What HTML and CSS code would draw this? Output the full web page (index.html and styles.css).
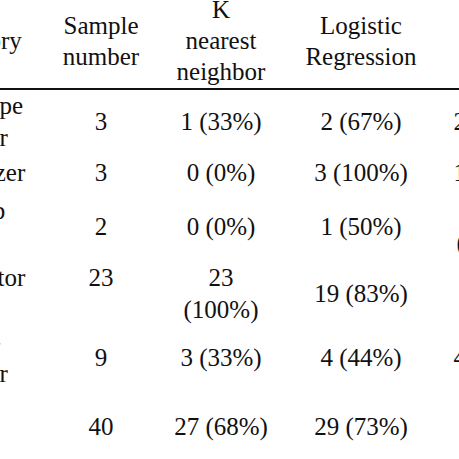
FILE: index.html
```html
<!DOCTYPE html>
<html>
<head>
<meta charset="utf-8">
<link rel="stylesheet" href="styles.css">
</head>
<body>
<table class="results">
  <colgroup>
    <col class="c-cat">
    <col class="c-num">
    <col class="c-knn">
    <col class="c-lr">
    <col class="c-svm">
  </colgroup>
  <thead>
    <tr class="head">
      <th>Category</th>
      <th>Sample<br>number</th>
      <th>K<br>nearest<br>neighbor</th>
      <th>Logistic<br>Regression</th>
      <th>SVM</th>
    </tr>
  </thead>
  <tbody>
    <tr class="r1">
      <td>Otoscope<br>holder</td>
      <td>3</td>
      <td>1 (33%)</td>
      <td>2 (67%)</td>
      <td>2 (67%)</td>
    </tr>
    <tr class="r2">
      <td>Nebulizer</td>
      <td>3</td>
      <td>0 (0%)</td>
      <td>3 (100%)</td>
      <td>1 (33%)</td>
    </tr>
    <tr class="r3">
      <td>Pump<br>(IV)</td>
      <td>2</td>
      <td>0 (0%)</td>
      <td>1 (50%)</td>
      <td>2<br>(100%)</td>
    </tr>
    <tr class="r4">
      <td>Ventilator<br>unit</td>
      <td class="top">23</td>
      <td>23<br>(100%)</td>
      <td>19 (83%)</td>
      <td>21<br>(91%)</td>
    </tr>
    <tr class="r5">
      <td>ECG<br>sensor</td>
      <td>9</td>
      <td>3 (33%)</td>
      <td>4 (44%)</td>
      <td>4 (44%)</td>
    </tr>
    <tr class="r6">
      <td>All</td>
      <td>40</td>
      <td>27 (68%)</td>
      <td>29 (73%)</td>
      <td>30<br>(75%)</td>
    </tr>
  </tbody>
</table>
</body>
</html>
```

FILE: styles.css
```css
html, body {
  margin: 0;
  padding: 0;
  width: 459px;
  height: 459px;
  overflow: hidden;
  background: #ffffff;
}

.results {
  margin-left: -86px;
  margin-top: -6px;
  width: 630px;
  table-layout: fixed;
  border-collapse: collapse;
  font-family: "Liberation Serif", "Times New Roman", serif;
  font-size: 25px;
  line-height: 31.5px;
  color: #111111;
}

.c-cat { width: 124px; }
.c-num { width: 126px; }
.c-knn { width: 114px; }
.c-lr  { width: 166px; }
.c-svm { width: 100px; }

.results th,
.results td {
  padding: 0;
  text-align: center;
  vertical-align: middle;
  white-space: nowrap;
  font-weight: normal;
}

.results td.top {
  vertical-align: top;
  padding-top: 1px;
}

.head th {
  line-height: 31px;
  padding-bottom: 1px;
  border-bottom: 2px solid #111111;
}

.r1 { height: 64.5px; }
.r2 { height: 39px; }
.r3 { height: 68px; }
.r4 { height: 66px; }
.r5 { height: 63px; }
.r6 { height: 75px; }
```
